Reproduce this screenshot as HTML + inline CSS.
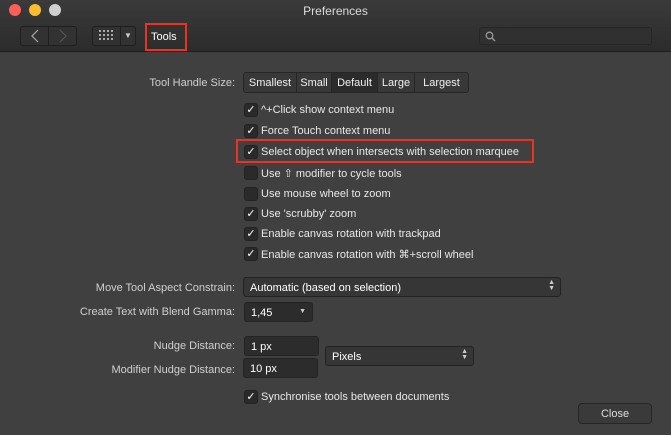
<!DOCTYPE html><html><head><style>
*{box-sizing:border-box;margin:0;padding:0}
body{width:671px;height:435px;background:#404040;font-family:"Liberation Sans",sans-serif;font-size:11px;color:#e6e6e6;position:relative;overflow:hidden}
.a{position:absolute}
.hdr{left:0;top:0;width:671px;height:52px;background:linear-gradient(#3a3a3a,#2c2c2c);border-bottom:1px solid #1e1e1e}
.dot{width:12px;height:12px;border-radius:50%;top:4px}
.btn{border:1px solid #1f1f1f;background:#323232;border-radius:3px}
.lbl{right:436px;color:#cfcfcf;text-align:right;white-space:nowrap}
.cb{left:244px;width:14px;height:14px;background:#2a2a2a;border:1px solid #222;border-radius:3px;color:#fff;font-size:11px;line-height:12px;text-align:center}
.ct{left:261px;white-space:nowrap;color:#e8e8e8}
.fld{background:#2c2c2c;border:1px solid #232323;border-radius:3px;padding:4px 6px 2px;color:#fff}
.seg{top:72px;height:21px;line-height:20px;text-align:center;border:1px solid #262626;background:#383838;color:#f0f0f0}
</style></head><body>
<div class="a hdr"></div>
<div class="a dot" style="left:9px;background:#fc5f57"></div>
<div class="a dot" style="left:29px;background:#fdbc2e"></div>
<div class="a dot" style="left:49px;background:#d0d0d0"></div>
<div class="a" style="left:0;width:671px;top:4px;text-align:center;font-size:12px;color:#dcdcdc">Preferences</div>
<div class="a btn" style="left:20px;top:26px;width:57px;height:20px"></div>
<div class="a" style="left:48px;top:26px;width:1px;height:20px;background:#1f1f1f"></div>
<svg class="a" style="left:30px;top:29px" width="10" height="14"><path d="M8 1L2 7l6 6" stroke="#aaa" stroke-width="1.2" fill="none"/></svg>
<svg class="a" style="left:58px;top:29px" width="10" height="14"><path d="M2 1l6 6-6 6" stroke="#555" stroke-width="1.2" fill="none"/></svg>
<div class="a btn" style="left:92px;top:26px;width:44px;height:20px"></div>
<div class="a" style="left:120px;top:26px;width:1px;height:20px;background:#1f1f1f"></div>
<svg class="a" style="left:99px;top:30px" width="16" height="12"><g fill="#aaa"><rect x="0" y="0" width="2" height="2"/><rect x="4" y="0" width="2" height="2"/><rect x="8" y="0" width="2" height="2"/><rect x="12" y="0" width="2" height="2"/><rect x="0" y="4" width="2" height="2"/><rect x="4" y="4" width="2" height="2"/><rect x="8" y="4" width="2" height="2"/><rect x="12" y="4" width="2" height="2"/><rect x="0" y="8" width="2" height="2"/><rect x="4" y="8" width="2" height="2"/><rect x="8" y="8" width="2" height="2"/><rect x="12" y="8" width="2" height="2"/></g></svg>
<div class="a" style="left:124px;top:31px;font-size:8px;color:#ccc">▼</div>
<div class="a" style="left:145px;top:23px;width:42px;height:28px;border:2px solid #f0311f"></div>
<div class="a" style="left:151px;top:31px;color:#fff;font-size:11px">Tools</div>
<div class="a" style="left:479px;top:27px;width:173px;height:18px;background:#303030;border:1px solid #262626;border-radius:3px"></div>
<svg class="a" style="left:485px;top:31px" width="11" height="11"><circle cx="4.5" cy="4.5" r="3.3" stroke="#999" stroke-width="1.3" fill="none"/><path d="M7 7l3 3" stroke="#999" stroke-width="1.4"/></svg>

<div class="a lbl" style="top:77px">Tool Handle Size:</div>
<div class="a seg" style="left:243px;width:54px;border-radius:3px 0 0 3px">Smallest</div>
<div class="a seg" style="left:296px;width:36px">Small</div>
<div class="a seg" style="left:331px;width:47px;background:#2b2b2b">Default</div>
<div class="a seg" style="left:377px;width:38px">Large</div>
<div class="a seg" style="left:414px;width:55px;border-radius:0 3px 3px 0">Largest</div>

<div class="a cb" style="top:103px">✓</div><div class="a ct" style="top:104px">^+Click show context menu</div>
<div class="a cb" style="top:124px">✓</div><div class="a ct" style="top:125px">Force Touch context menu</div>
<div class="a" style="left:236px;top:139px;width:298px;height:24px;border:2px solid #f0311f"></div>
<div class="a cb" style="top:145px">✓</div><div class="a ct" style="top:146px">Select object when intersects with selection marquee</div>
<div class="a cb" style="top:166px"></div><div class="a ct" style="top:167px">Use ⇧ modifier to cycle tools</div>
<div class="a cb" style="top:187px"></div><div class="a ct" style="top:188px">Use mouse wheel to zoom</div>
<div class="a cb" style="top:207px">✓</div><div class="a ct" style="top:208px">Use 'scrubby' zoom</div>
<div class="a cb" style="top:227px">✓</div><div class="a ct" style="top:228px">Enable canvas rotation with trackpad</div>
<div class="a cb" style="top:247px">✓</div><div class="a ct" style="top:248px">Enable canvas rotation with ⌘+scroll wheel</div>

<div class="a lbl" style="top:282px">Move Tool Aspect Constrain:</div>
<div class="a fld" style="left:243px;top:277px;width:318px;height:20px;background:#363636">Automatic (based on selection)<span style="position:absolute;right:5px;top:2px;font-size:7px;line-height:6px;color:#ccc">▲<br>▼</span></div>
<div class="a lbl" style="top:306px">Create Text with Blend Gamma:</div>
<div class="a fld" style="left:244px;top:302px;width:69px;height:20px">1,45<span style="position:absolute;right:6px;top:5px;font-size:7px;color:#ccc">▼</span></div>
<div class="a lbl" style="top:340px">Nudge Distance:</div>
<div class="a fld" style="left:244px;top:336px;width:75px;height:20px">1 px</div>
<div class="a lbl" style="top:364px">Modifier Nudge Distance:</div>
<div class="a fld" style="left:243px;top:358px;width:75px;height:20px">10 px</div>
<div class="a fld" style="left:325px;top:346px;width:149px;height:20px;background:#363636">Pixels<span style="position:absolute;right:5px;top:2px;font-size:7px;line-height:6px;color:#ccc">▲<br>▼</span></div>
<div class="a cb" style="top:390px">✓</div><div class="a ct" style="top:391px">Synchronise tools between documents</div>
<div class="a" style="left:578px;top:403px;width:74px;height:21px;border:1px solid #262626;border-radius:4px;background:#3a3a3a;text-align:center;line-height:20px;color:#ddd">Close</div>
</body></html>
